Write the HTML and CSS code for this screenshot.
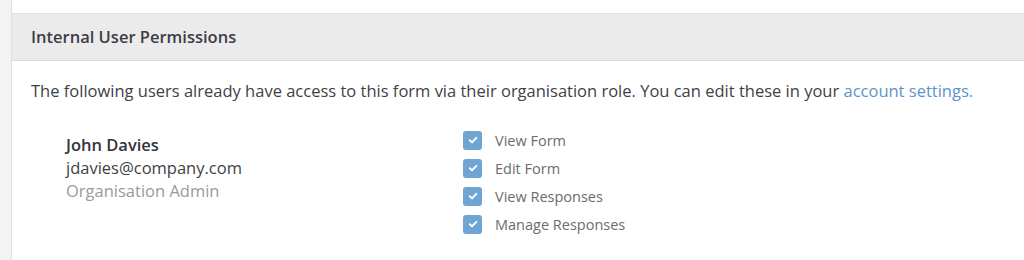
FILE: index.html
```html
<!DOCTYPE html>
<html lang="en">
<head>
    <meta charset="UTF-8">
    <title>Internal User Permissions</title>
    <link rel="stylesheet" href="styles.css">
</head>
<body>
    <div class="sidebar"></div>

    <div class="main">
        <div class="panel">
            <div class="panel-heading">Internal User Permissions</div>

            <div class="panel-body">
                <p class="intro">The following users already have access to this form via their organisation role. You can edit these in your <a href="#">account settings.</a></p>

                <div class="user-row">
                    <div class="user">
                        <div class="user-name">John Davies</div>
                        <div class="user-email">jdavies@company.com</div>
                        <div class="user-role">Organisation Admin</div>
                    </div>

                    <ul class="perms">
                        <li><span class="check"><svg viewBox="0 0 10 10"><path d="M2.3 5.2 L4.2 7 L7.8 3.2"/></svg></span>View Form</li>
                        <li><span class="check"><svg viewBox="0 0 10 10"><path d="M2.3 5.2 L4.2 7 L7.8 3.2"/></svg></span>Edit Form</li>
                        <li><span class="check"><svg viewBox="0 0 10 10"><path d="M2.3 5.2 L4.2 7 L7.8 3.2"/></svg></span>View Responses</li>
                        <li><span class="check"><svg viewBox="0 0 10 10"><path d="M2.3 5.2 L4.2 7 L7.8 3.2"/></svg></span>Manage Responses</li>
                    </ul>
                </div>
            </div>
        </div>
    </div>
</body>
</html>
```

FILE: styles.css
```css
body {
    margin: 0;
    display: flex;
    min-height: 260px;
    font-family: 'Open Sans', 'Liberation Sans', sans-serif;
    font-size: 16.5px;
    color: #444;
    background: #fff;
}

.sidebar {
    width: 11px;
    background: #f3f3f3;
    border-right: 1px solid #dde3e3;
}

.main {
    flex: 1;
    padding-top: 13px;
}

.panel-heading {
    height: 46px;
    line-height: 46px;
    padding-left: 19px;
    background: #ebebeb;
    border-top: 1px solid #dbe1e1;
    border-bottom: 1px solid #d6dddc;
    font-weight: 600;
    color: #3d3d48;
}

.panel-body {
    padding: 0 19px;
}

.intro {
    margin: 18px 0 0;
    line-height: 24px;
    color: #3f3f46;
}

.intro a {
    color: #5e93c9;
    text-decoration: none;
}

.user-row {
    display: flex;
    margin-top: 23px;
}

.user {
    width: 397px;
    padding-left: 35px;
    line-height: 23px;
    padding-top: 7px;
}

.user-name {
    font-weight: 600;
    color: #33333d;
}

.user-email {
    color: #3f3f46;
}

.user-role {
    color: #9a9a9a;
}

.perms {
    list-style: none;
    margin: 0;
    padding: 0;
}

.perms li {
    display: flex;
    align-items: center;
    height: 28px;
    font-size: 14.5px;
    color: #6b6b70;
}

.check {
    width: 19px;
    height: 19px;
    margin-right: 13px;
    border-radius: 3px;
    background: #6fa5d3;
    display: flex;
    align-items: center;
    justify-content: center;
}

.check svg {
    width: 12px;
    height: 12px;
    fill: none;
    stroke: #fff;
    stroke-width: 1.6;
    stroke-linecap: round;
    stroke-linejoin: round;
}
```
